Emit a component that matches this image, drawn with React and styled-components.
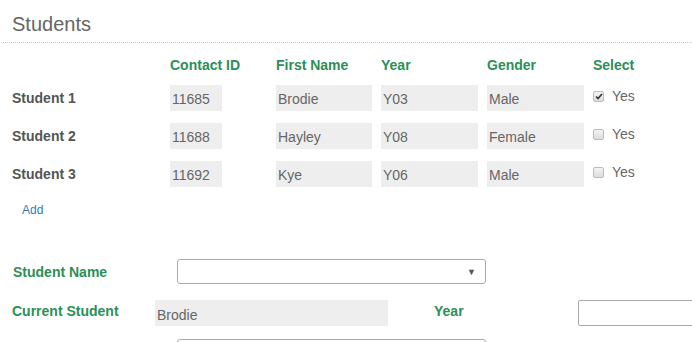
import React from 'react';
import styled, { createGlobalStyle } from 'styled-components';

const GlobalStyle = createGlobalStyle`
  body {
    margin: 0;
    background: #fff;
    font-family: "Liberation Sans", Arial, sans-serif;
  }
`;

const green = '#2b8f57';

const Page = styled.div`
  padding-top: 13px;
  overflow: hidden;
  width: 692px;
  height: 342px;
`;

const Title = styled.h2`
  margin: 0 0 0 3px;
  padding: 0 0 6px 9px;
  font-size: 20px;
  font-weight: normal;
  color: #666;
  border-bottom: 1px dotted #c8c8c8;
`;

const Grid = styled.div`
  display: grid;
  grid-template-columns: 158px 106px 105px 106px 106px auto;
  row-gap: 12px;
  align-items: center;
  padding: 14px 0 0 12px;
`;

const HeadCell = styled.div`
  font-size: 14px;
  font-weight: bold;
  color: ${green};
  line-height: 16px;
`;

const RowLabel = styled.div`
  font-size: 14px;
  font-weight: bold;
  color: #555;
`;

const Field = styled.div`
  width: ${({ $w }) => $w}px;
  height: 26px;
  box-sizing: border-box;
  padding: 2px 0 0 2px;
  line-height: 24px;
  background: #eee;
  font-size: 14px;
  color: #666;
`;

const SelectCell = styled.label`
  display: flex;
  align-items: center;
  gap: 8px;
  align-self: start;
  padding-top: 3px;
  font-size: 14px;
  color: #666;
`;

const Check = styled.span`
  width: 11px;
  height: 11px;
  box-sizing: border-box;
  border: 1px solid #bbb;
  border-radius: 2px;
  background: linear-gradient(#f4f4f4, #dcdcdc);
  display: flex;
  align-items: center;
  justify-content: center;
  margin-top: 1px;
`;

const AddLink = styled.a`
  display: block;
  margin: 16px 0 0 22px;
  font-size: 12px;
  color: #337ab7;
  text-decoration: none;
`;

const Form = styled.div`
  display: flex;
  flex-direction: column;
  gap: 16px;
  margin-top: 42px;
`;

const FormRow = styled.div`
  display: flex;
  align-items: center;
  padding-left: ${({ $pad }) => $pad}px;
  margin-top: ${({ $mt }) => $mt || 0}px;
`;

const FormLabel = styled.div`
  width: ${({ $w }) => $w}px;
  flex-shrink: 0;
  font-size: 14px;
  font-weight: bold;
  color: ${green};
  margin-top: ${({ $up }) => ($up ? '-4px' : '0')};
  margin-left: ${({ $ml }) => $ml || 0}px;
`;

const Select = styled.div`
  width: 309px;
  height: 25px;
  flex-shrink: 0;
  box-sizing: border-box;
  border: 1px solid #aaa;
  border-radius: 3px;
  display: flex;
  align-items: center;
  justify-content: flex-end;
  padding-right: 9px;
  font-size: 9px;
  color: #555;
`;

const ReadOnly = styled.div`
  width: 233px;
  height: 26px;
  flex-shrink: 0;
  box-sizing: border-box;
  padding: 3px 0 0 2px;
  line-height: 24px;
  background: #eee;
  font-size: 14px;
  color: #666;
`;

const TextInput = styled.div`
  width: 160px;
  height: 26px;
  flex-shrink: 0;
  box-sizing: border-box;
  border: 1px solid #aaa;
  border-radius: 2px;
  background: #fff;
`;

const students = [
  { id: '11685', name: 'Brodie', year: 'Y03', gender: 'Male', checked: true },
  { id: '11688', name: 'Hayley', year: 'Y08', gender: 'Female', checked: false },
  { id: '11692', name: 'Kye', year: 'Y06', gender: 'Male', checked: false },
];

const App = () => {
  return (
    <Page>
      <GlobalStyle />
      <Title>Students</Title>
      <Grid>
        <div />
        <HeadCell>Contact ID</HeadCell>
        <HeadCell>First Name</HeadCell>
        <HeadCell>Year</HeadCell>
        <HeadCell>Gender</HeadCell>
        <HeadCell>Select</HeadCell>
        {students.map((s, i) => (
          <React.Fragment key={s.id}>
            <RowLabel>Student {i + 1}</RowLabel>
            <Field $w={52}>{s.id}</Field>
            <Field $w={96}>{s.name}</Field>
            <Field $w={97}>{s.year}</Field>
            <Field $w={97}>{s.gender}</Field>
            <SelectCell>
              <Check>
                {s.checked && (
                  <svg width="8" height="7" viewBox="0 0 8 7">
                    <path d="M1 3.5 L3 5.5 L7 1" fill="none" stroke="#333" strokeWidth="1.6" />
                  </svg>
                )}
              </Check>
              Yes
            </SelectCell>
          </React.Fragment>
        ))}
      </Grid>
      <AddLink href="#">Add</AddLink>
      <Form>
        <FormRow $pad={13}>
          <FormLabel $w={164}>Student Name</FormLabel>
          <Select>▼</Select>
        </FormRow>
        <FormRow $pad={12}>
          <FormLabel $w={143} $up>Current Student</FormLabel>
          <ReadOnly>Brodie</ReadOnly>
          <FormLabel $w={144} $up $ml={46}>Year</FormLabel>
          <TextInput />
        </FormRow>
        <FormRow $pad={177} $mt={-3}>
          <Select />
        </FormRow>
      </Form>
    </Page>
  );
};

export default App;
